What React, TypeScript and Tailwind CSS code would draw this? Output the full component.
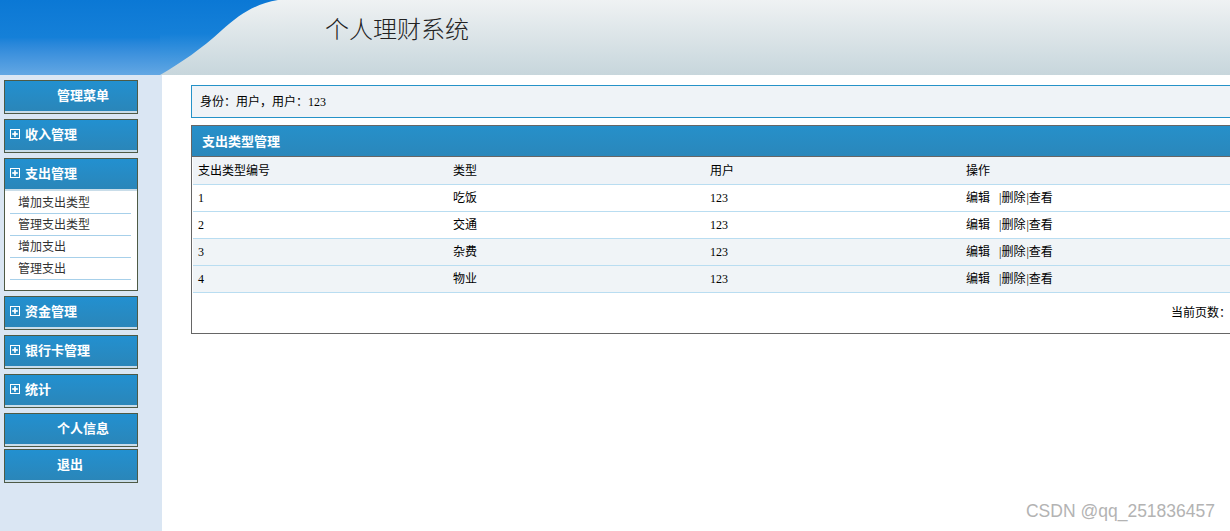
import React from "react";

const CJK = '"Noto Sans CJK SC", "Liberation Sans", sans-serif';
const BODY = '"Liberation Serif", "Noto Sans CJK SC", serif';

function PlusBox() {
  return (
    <svg width="10" height="10" viewBox="0 0 10 10" className="shrink-0">
      <rect x="0.5" y="0.5" width="9" height="9" fill="none" stroke="#ffffff" strokeWidth="1" />
      <line x1="2.2" y1="5" x2="7.8" y2="5" stroke="#ffffff" strokeWidth="1.7" />
      <line x1="5" y1="2.2" x2="5" y2="7.8" stroke="#ffffff" strokeWidth="1.7" />
    </svg>
  );
}

function MenuHead({ label, icon }: { label: string; icon?: boolean }) {
  return (
    <div className="flex flex-col h-[32px]">
      <div
        className={
          "flex-1 flex items-center pb-[3px] bg-gradient-to-b from-[#2290d0] to-[#2a86b9] text-white font-bold text-[13px] " +
          (icon ? "pl-[5px] gap-[5px]" : "pl-[52px]")
        }
        style={{ fontFamily: CJK }}
      >
        {icon && <PlusBox />}
        <span className="leading-none">{label}</span>
      </div>
      <div className="h-[2px] bg-[#c9dde9]" />
    </div>
  );
}

function MenuButton({ label, icon, mb = "mb-[5px]" }: { label: string; icon?: boolean; mb?: string }) {
  return (
    <div className={"border border-[#4e5a45] " + mb}>
      <MenuHead label={label} icon={icon} />
    </div>
  );
}

export default function App() {
  const rows = [
    { id: "1", type: "吃饭", bg: "bg-white" },
    { id: "2", type: "交通", bg: "bg-white" },
    { id: "3", type: "杂费", bg: "bg-[#f0f4f7]" },
    { id: "4", type: "物业", bg: "bg-[#f0f4f7]" },
  ];
  return (
    <div className="relative w-[1230px] h-[531px] overflow-hidden bg-white" style={{ fontFamily: CJK }}>
      {/* header */}
      <div className="flex h-[75px]">
        <div className="w-[160px] shrink-0 h-full bg-gradient-to-b from-[#0b78d5] via-[#1580d8] to-[#62a7e3]" />
        <svg width="125" height="75" viewBox="0 0 125 75" className="shrink-0 block">
          <defs>
            <linearGradient id="blueG" x1="0" y1="0" x2="0" y2="1">
              <stop offset="0" stopColor="#0b78d5" />
              <stop offset="0.45" stopColor="#1580d8" />
              <stop offset="1" stopColor="#62a7e3" />
            </linearGradient>
            <linearGradient id="grayG" x1="0" y1="0" x2="0" y2="1">
              <stop offset="0" stopColor="#eff2f3" />
              <stop offset="1" stopColor="#c7d6dc" />
            </linearGradient>
          </defs>
          <rect x="0" y="0" width="125" height="75" fill="url(#grayG)" />
          <path d="M0 0 L118 0 C 95 4, 80 14, 62 30 C 40 50, 22 62, 0 75 Z" fill="url(#blueG)" />
        </svg>
        <div className="flex-1 h-full bg-gradient-to-b from-[#eff2f3] to-[#c7d6dc] pl-[40px] pt-[13px]">
          <span className="text-[24px] leading-[30px] text-[#222] font-light" style={{ fontFamily: CJK }}>
            个人理财系统
          </span>
        </div>
      </div>

      <div className="flex h-[456px]">
        {/* sidebar */}
        <div className="w-[162px] shrink-0 h-full bg-[#dae6f3] pt-[5px] pl-[4px] pr-[24px]">
          <MenuButton label="管理菜单" />
          <MenuButton label="收入管理" icon />
          <div className="border border-[#4e5a45] mb-[5px] bg-white">
            <MenuHead label="支出管理" icon />
            <div className="pt-[1px] pb-[10px] pl-[5px] pr-[6px]">
              {["增加支出类型", "管理支出类型", "增加支出", "管理支出"].map((t) => (
                <div
                  key={t}
                  className="h-[22px] border-b border-[#a7d0ea] pl-[8px] pb-[1px] flex items-center text-[12px] text-[#333]"
                >
                  {t}
                </div>
              ))}
            </div>
          </div>
          <MenuButton label="资金管理" icon />
          <MenuButton label="银行卡管理" icon />
          <MenuButton label="统计" icon />
          <MenuButton label="个人信息" mb="mb-[2px]" />
          <MenuButton label="退出" />
        </div>

        {/* main */}
        <div className="flex-1 min-w-0 pt-[10px] pl-[29px]">
          <div
            className="w-[1045px] h-[33px] border border-[#2592c8] bg-[#eff3f7] pl-[8px] flex items-center text-[12px] text-black"
            style={{ fontFamily: BODY }}
          >
            身份：用户，用户：123
          </div>
          <div className="w-[1045px] mt-[7px] border border-[#666]">
            <div
              className="h-[31px] bg-gradient-to-b from-[#2690ca] to-[#2a87bb] border-b border-[#666] pl-[10px] pb-[1px] flex items-center text-white font-bold text-[13px]"
              style={{ fontFamily: CJK }}
            >
              支出类型管理
            </div>
            <div className="ml-[1px] text-[12px] text-black" style={{ fontFamily: BODY }}>
              <div className="grid grid-cols-[255px_257px_256px_1fr] h-[28px] bg-[#eff3f7] border-b border-[#b9ddf1] items-center">
                <div className="pl-[5px]">支出类型编号</div>
                <div className="pl-[5px]">类型</div>
                <div className="pl-[5px]">用户</div>
                <div className="pl-[5px]">操作</div>
              </div>
              {rows.map((r) => (
                <div
                  key={r.id}
                  className={"grid grid-cols-[255px_257px_256px_1fr] h-[27px] border-b border-[#b9ddf1] items-center " + r.bg}
                >
                  <div className="pl-[5px]">{r.id}</div>
                  <div className="pl-[5px]">{r.type}</div>
                  <div className="pl-[5px]">123</div>
                  <div className="pl-[5px] flex items-center">
                    <span>编辑</span>
                    <span className="ml-[9px]">|</span>
                    <span>删除</span>
                    <span className="ml-[1px]">|</span>
                    <span>查看</span>
                  </div>
                </div>
              ))}
            </div>
            <div className="h-[40px] flex items-center justify-end pr-[4px] text-[12px] text-black" style={{ fontFamily: BODY }}>
              当前页数：
            </div>
          </div>
        </div>
      </div>

      <div
        className="absolute right-[15px] bottom-[7px] text-[17.5px] text-[#b3b3b3]"
        style={{ fontFamily: '"Liberation Sans", Arial, sans-serif' }}
      >
        CSDN @qq_251836457
      </div>
    </div>
  );
}
